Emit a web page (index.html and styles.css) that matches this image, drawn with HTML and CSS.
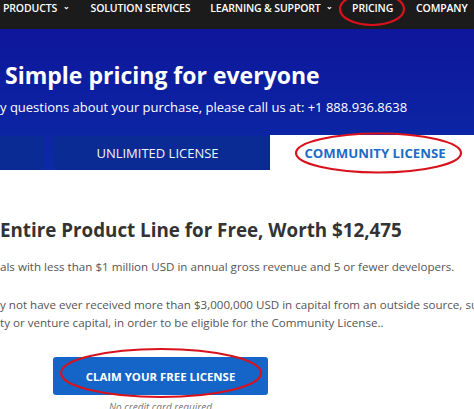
FILE: index.html
```html
<!DOCTYPE html>
<html>
<head>
<meta charset="utf-8">
<link rel="stylesheet" href="styles.css">
</head>
<body>
<div class="page">
  <nav class="topnav">
    <span class="nav-item nav-products">PRODUCTS <span class="chev">&#8964;</span></span>
    <span class="nav-item nav-solutions">SOLUTION SERVICES</span>
    <span class="nav-item nav-learning">LEARNING &amp; SUPPORT <span class="chev">&#8964;</span></span>
    <span class="nav-item nav-pricing">PRICING</span>
    <span class="nav-item nav-company">COMPANY <span class="chev">&#8964;</span></span>
  </nav>
  <header class="hero">
    <h1 class="hero-title">Simple pricing for everyone</h1>
    <p class="hero-sub">y questions about your purchase, please call us at: +1 888.936.8638</p>
    <div class="tabs">
      <div class="tab tab-first"></div>
      <div class="tab tab-unlimited">UNLIMITED LICENSE</div>
      <div class="tab tab-community">COMMUNITY LICENSE</div>
    </div>
  </header>
  <main class="content">
    <h2 class="content-title">Entire Product Line for Free, Worth $12,475</h2>
    <p class="text">als with less than $1 million USD in annual gross revenue and 5 or fewer developers.</p>
    <p class="text">y not have ever received more than $3,000,000 USD in capital from an outside source, such as private equi<br>ty or venture capital, in order to be eligible for the Community License..</p>
    <div class="cta">
      <a class="cta-button">CLAIM YOUR FREE LICENSE</a>
      <div class="cta-note">No credit card required</div>
    </div>
  </main>
  <svg class="marks" width="474" height="409" viewBox="0 0 474 409">
    <ellipse cx="372" cy="9" rx="32" ry="16" />
    <ellipse cx="378.5" cy="153" rx="82.5" ry="19.5" />
    <ellipse cx="161" cy="373" rx="100" ry="24" />
  </svg>
</div>
</body>
</html>
```
FILE: styles.css
```css
* { box-sizing: border-box; }
html, body { margin: 0; padding: 0; }
body {
  width: 474px;
  height: 409px;
  overflow: hidden;
  background: #ffffff;
  font-family: "Open Sans", "Noto Sans", "Liberation Sans", sans-serif;
}
.page {
  position: relative;
  width: 474px;
  height: 409px;
  overflow: hidden;
}
.topnav {
  height: 29px;
  background: #1b1b1b;
  display: flex;
  align-items: flex-start;
  padding: 0 0 0 3px;
  white-space: nowrap;
  color: #ffffff;
  font-size: 10.5px;
  line-height: 16px;
  font-weight: 600;
  letter-spacing: -0.15px;
}
.nav-item { flex: none; }
.chev { font-size: 8px; position: relative; top: -3px; margin-left: 3px; }
.nav-solutions { margin-left: 21px; }
.nav-learning { margin-left: 20px; }
.nav-pricing { margin-left: 19px; }
.nav-company { margin-left: 23px; }

.hero {
  background: linear-gradient(180deg, #0e169c 0%, #0c22a2 60%, #0b2aa6 100%);
  padding-top: 31px;
  color: #ffffff;
}
.hero-title {
  margin: 0 0 0 5px;
  font-size: 23px;
  font-weight: 700;
  line-height: 30px;
  white-space: nowrap;
}
.hero-sub {
  margin: 7px 0 0 0;
  font-size: 13px;
  line-height: 20px;
  white-space: nowrap;
}
.tabs {
  display: flex;
  margin-top: 19px;
  height: 34px;
}
.tab {
  height: 34px;
  display: flex;
  align-items: center;
  justify-content: center;
  font-size: 13px;
  white-space: nowrap;
}
.tab-first { width: 44px; background: #0a2b94; }
.tab-unlimited { width: 216px; margin-left: 10px; background: #0a2b94; color: #f2f4ff; padding-right: 9px; }
.tab-community {
  flex: 1;
  background: #ffffff;
  color: #1a6cc6;
  font-weight: 700;
  font-size: 13.2px;
  margin-top: -1px;
  height: 35px;
  padding-left: 6px;
}

.content { padding-top: 47px; color: #444; }
.content-title {
  margin: 0;
  font-size: 18.8px;
  font-weight: 700;
  color: #333333;
  line-height: 26px;
  white-space: nowrap;
}
.text {
  margin: 15px 0 0 0;
  font-size: 11.6px;
  line-height: 18px;
  color: #555555;
  white-space: nowrap;
}
.text + .text { margin-top: 20px; }
.cta {
  width: 215px;
  margin: 25px 0 0 53px;
  display: flex;
  flex-direction: column;
  align-items: center;
}
.cta-button {
  display: flex;
  align-items: center;
  justify-content: center;
  width: 215px;
  height: 38px;
  background: #1565c9;
  border-radius: 3px;
  color: #ffffff;
  font-size: 11.4px;
  font-weight: 700;
}
.cta-note {
  margin-top: 5px;
  font-size: 10px;
  font-style: italic;
  color: #777777;
  line-height: 14px;
}
.marks {
  position: absolute;
  left: 0;
  top: 0;
  pointer-events: none;
}
.marks ellipse {
  fill: none;
  stroke: #d8121c;
  stroke-width: 2.2;
}
```
